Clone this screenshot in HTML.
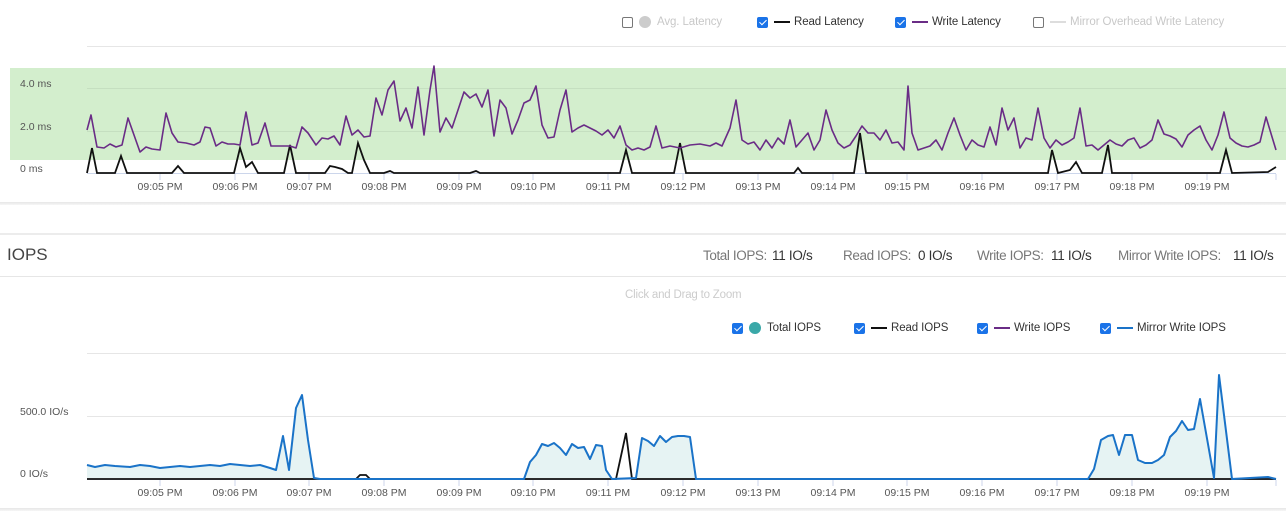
<!DOCTYPE html>
<html><head><meta charset="utf-8"><style>
body{margin:0;width:1286px;height:518px;background:#fff;font-family:"Liberation Sans",Arial,sans-serif;overflow:hidden;position:relative}
.abs{position:absolute}
.leg{position:absolute;font-size:11.5px;display:flex;align-items:center;white-space:nowrap;letter-spacing:-0.1px}
.cb{width:11px;height:11px;border-radius:2px;box-sizing:border-box;margin-right:6px;display:inline-block;position:relative}
.cb.on{background:#1a73e8}
.cb.on:after{content:"";position:absolute;left:3.5px;top:1px;width:3px;height:6px;border:solid #fff;border-width:0 1.6px 1.6px 0;transform:rotate(45deg)}
.cb.off{border:1px solid #777;background:#fff}
.ln{width:16px;height:2px;margin-right:4px;display:inline-block}
.dot{width:12px;height:12px;border-radius:50%;margin-right:6px;display:inline-block}
.sl{position:absolute;top:248px;font-size:13.5px;color:#777;white-space:nowrap;letter-spacing:-0.4px}
.sv{position:absolute;top:248px;font-size:13.5px;color:#333;white-space:nowrap;letter-spacing:-0.3px}
</style></head><body>
<div class="leg" style="left:622px;top:16px;color:#c8c8c8"><span class="cb off"></span><span class="dot" style="background:#ccc"></span>Avg. Latency</div>
<div class="leg" style="left:757px;top:16px;color:#333"><span class="cb on"></span><span class="ln" style="background:#111"></span>Read Latency</div>
<div class="leg" style="left:895px;top:16px;color:#333"><span class="cb on"></span><span class="ln" style="background:#6a2c86"></span>Write Latency</div>
<div class="leg" style="left:1033px;top:16px;color:#c8c8c8"><span class="cb off"></span><span class="ln" style="background:#ddd"></span>Mirror Overhead Write Latency</div>
<div class="abs" style="left:0;top:202px;width:1286px;height:3px;background:linear-gradient(#e6e6e6,#f6f6f6)"></div>
<div class="abs" style="left:0;top:233px;width:1286px;height:2px;background:#ececec"></div>
<div class="abs" style="left:7px;top:245px;font-size:17px;color:#444">IOPS</div>
<div class="sl" style="left:703px">Total IOPS:</div><div class="sv" style="left:772px">11 IO/s</div>
<div class="sl" style="left:843px">Read IOPS:</div><div class="sv" style="left:918px">0 IO/s</div>
<div class="sl" style="left:977px">Write IOPS:</div><div class="sv" style="left:1051px">11 IO/s</div>
<div class="sl" style="left:1118px">Mirror Write IOPS:</div><div class="sv" style="left:1233px">11 IO/s</div>
<div class="abs" style="left:0;top:276px;width:1286px;height:1px;background:#e6e6e6"></div>
<div class="abs" style="left:625px;top:289px;font-size:11.5px;color:#ccc;letter-spacing:-0.2px">Click and Drag to Zoom</div>
<div class="leg" style="left:732px;top:322px;color:#333"><span class="cb on"></span><span class="dot" style="background:#3aa8a8"></span>Total IOPS</div>
<div class="leg" style="left:854px;top:322px;color:#333"><span class="cb on"></span><span class="ln" style="background:#111"></span>Read IOPS</div>
<div class="leg" style="left:977px;top:322px;color:#333"><span class="cb on"></span><span class="ln" style="background:#6a2c86"></span>Write IOPS</div>
<div class="leg" style="left:1100px;top:322px;color:#333"><span class="cb on"></span><span class="ln" style="background:#1a73c8"></span>Mirror Write IOPS</div>
<div class="abs" style="left:0;top:508px;width:1286px;height:3px;background:linear-gradient(#e6e6e6,#f6f6f6)"></div>

<svg class="abs" style="left:0;top:0" width="1286" height="518" font-family="Liberation Sans, Arial, sans-serif" font-size="10.5" fill="#555">
<rect x="10" y="68" width="1276" height="92" fill="#d3eecd"/>
<g stroke="#e6e6e6" stroke-width="1"><line x1="87" y1="46.5" x2="1286" y2="46.5"/><line x1="87" y1="88.5" x2="1286" y2="88.5" stroke="#c5dfc0"/><line x1="87" y1="131.5" x2="1286" y2="131.5" stroke="#c5dfc0"/>
<line x1="87" y1="353.5" x2="1286" y2="353.5"/><line x1="87" y1="416.5" x2="1286" y2="416.5"/></g>
<line x1="87" y1="173.5" x2="1276" y2="173.5" stroke="#ccd6eb"/>
<line x1="87" y1="479.5" x2="1276" y2="479.5" stroke="#ccd6eb"/>
<g stroke="#ccd6eb">
<path d="M160 174v6M235 174v6M309 174v6M384 174v6M459 174v6M533 174v6M608 174v6M683 174v6M758 174v6M833 174v6M907 174v6M982 174v6M1057 174v6M1132 174v6M1207 174v6M1276 174v6"/>
<path d="M160 480v6M235 480v6M309 480v6M384 480v6M459 480v6M533 480v6M608 480v6M683 480v6M758 480v6M833 480v6M907 480v6M982 480v6M1057 480v6M1132 480v6M1207 480v6M1276 480v6"/>
</g>
<text x="20" y="87">4.0 ms</text><text x="20" y="130">2.0 ms</text><text x="20" y="172">0 ms</text>
<text x="20" y="415">500.0 IO/s</text><text x="20" y="477">0 IO/s</text>
<g text-anchor="middle">
<text x="160" y="190">09:05 PM</text><text x="235" y="190">09:06 PM</text><text x="309" y="190">09:07 PM</text><text x="384" y="190">09:08 PM</text><text x="459" y="190">09:09 PM</text><text x="533" y="190">09:10 PM</text><text x="608" y="190">09:11 PM</text><text x="683" y="190">09:12 PM</text><text x="758" y="190">09:13 PM</text><text x="833" y="190">09:14 PM</text><text x="907" y="190">09:15 PM</text><text x="982" y="190">09:16 PM</text><text x="1057" y="190">09:17 PM</text><text x="1132" y="190">09:18 PM</text><text x="1207" y="190">09:19 PM</text>
<text x="160" y="496">09:05 PM</text><text x="235" y="496">09:06 PM</text><text x="309" y="496">09:07 PM</text><text x="384" y="496">09:08 PM</text><text x="459" y="496">09:09 PM</text><text x="533" y="496">09:10 PM</text><text x="608" y="496">09:11 PM</text><text x="683" y="496">09:12 PM</text><text x="758" y="496">09:13 PM</text><text x="833" y="496">09:14 PM</text><text x="907" y="496">09:15 PM</text><text x="982" y="496">09:16 PM</text><text x="1057" y="496">09:17 PM</text><text x="1132" y="496">09:18 PM</text><text x="1207" y="496">09:19 PM</text>
</g>
<polyline fill="none" stroke="#111" stroke-width="1.8" points="87,173 92,148 97,173 115,173 121,156 127,173 172,173 178,166 184,173 234,173 240,148 246,167 252,162 258,173 284,173 290,145 296,173 325,173 330,166 335,167 342,169 348,173 352,173 358,143 364,160 370,173 384,173 390,171 394,173 470,173 476,171 480,173 620,173 626,150 632,173 674,173 680,143 686,173 794,173 798,168 802,173 854,173 860,133 866,173 1048,173 1052,150 1058,173 1070,170 1076,162 1082,173 1102,173 1108,145 1112,173 1220,173 1226,150 1232,173 1268,172 1276,167"/>
<polyline fill="none" stroke="#6a2c86" stroke-width="1.6" stroke-linejoin="round" points="87,130 91,115 97,147 104,148 110,144 116,147 122,145 128,118 134,135 140,152 146,147 152,149 160,150 166,113 172,133 178,142 186,143 194,145 200,142 205,127 210,128 216,146 222,142 228,144 234,144 240,145 246,112 252,145 258,143 265,123 271,146 280,146 290,146 296,148 302,127 308,133 316,145 322,138 328,139 334,136 340,145 346,116 352,135 358,130 364,137 370,136 376,98 382,115 388,90 394,81 400,121 406,108 412,128 418,87 424,135 430,90 434,66 440,132 446,118 452,128 458,110 464,92 470,98 476,94 482,107 488,90 494,136 500,100 506,108 512,134 518,120 524,103 530,100 536,86 542,125 548,138 554,137 560,110 566,90 572,132 578,128 584,125 590,128 596,131 602,135 608,130 614,138 620,126 626,145 632,150 638,148 644,150 650,147 656,126 662,148 670,146 680,148 690,145 700,144 710,146 716,143 722,146 730,128 736,100 742,140 748,144 754,142 760,150 766,140 772,148 778,138 784,144 790,120 796,147 802,140 808,133 814,150 820,140 826,110 832,130 838,143 844,148 850,145 856,136 862,126 868,133 874,133 880,140 886,130 892,143 898,142 904,150 908,86 912,133 918,150 924,148 930,146 936,140 942,150 948,133 954,118 960,135 966,150 972,140 978,145 984,147 990,127 996,145 1002,108 1008,130 1014,118 1020,148 1026,138 1032,140 1038,108 1044,138 1050,148 1056,140 1062,145 1068,142 1074,138 1080,108 1086,146 1092,145 1098,150 1104,145 1110,140 1116,144 1122,146 1128,140 1134,138 1140,148 1146,145 1152,140 1158,120 1164,134 1170,136 1176,139 1182,147 1188,135 1194,130 1200,126 1206,140 1212,150 1218,135 1224,112 1230,138 1236,143 1242,146 1248,147 1254,145 1260,142 1266,117 1276,150"/>
<polygon fill="#e6f3f3" points="87,479 87,465 95,467 105,465 115,466 130,467 140,465 150,466 160,468 170,467 180,466 190,467 200,466 210,465 220,466 230,464 240,465 250,466 260,465 270,468 276,470 283,436 289,470 296,408 302,395 308,440 314,478 320,479 524,479 530,462 536,455 542,444 548,446 554,443 560,448 566,455 572,444 578,448 584,447 590,459 596,445 602,446 606,470 612,479 636,478 642,438 648,441 654,446 660,436 666,442 672,437 678,436 684,436 690,437 696,479 1088,479 1094,469 1101,440 1108,436 1113,435 1119,455 1125,435 1132,435 1138,460 1145,463 1152,463 1158,460 1164,455 1170,437 1176,431 1182,421 1188,430 1194,429 1200,399 1214,478 1219,375 1232,479 1276,479"/>
<polyline fill="none" stroke="#111" stroke-width="1.8" points="87,479 356,479 360,475 366,475 370,479 616,479 626,433 632,479 1276,479"/>
<polyline fill="none" stroke="#1a73c8" stroke-width="2" stroke-linejoin="round" points="87,465 95,467 105,465 115,466 130,467 140,465 150,466 160,468 170,467 180,466 190,467 200,466 210,465 220,466 230,464 240,465 250,466 260,465 270,468 276,470 283,436 289,470 296,408 302,395 308,440 314,478 320,479 524,479 530,462 536,455 542,444 548,446 554,443 560,448 566,455 572,444 578,448 584,447 590,459 596,445 602,446 606,470 612,479 636,478 642,438 648,441 654,446 660,436 666,442 672,437 678,436 684,436 690,437 696,479 1088,479 1094,469 1101,440 1108,436 1113,435 1119,455 1125,435 1132,435 1138,460 1145,463 1152,463 1158,460 1164,455 1170,437 1176,431 1182,421 1188,430 1194,429 1200,399 1214,478 1219,375 1232,479 1268,477 1276,479"/>
</svg>
</body></html>
